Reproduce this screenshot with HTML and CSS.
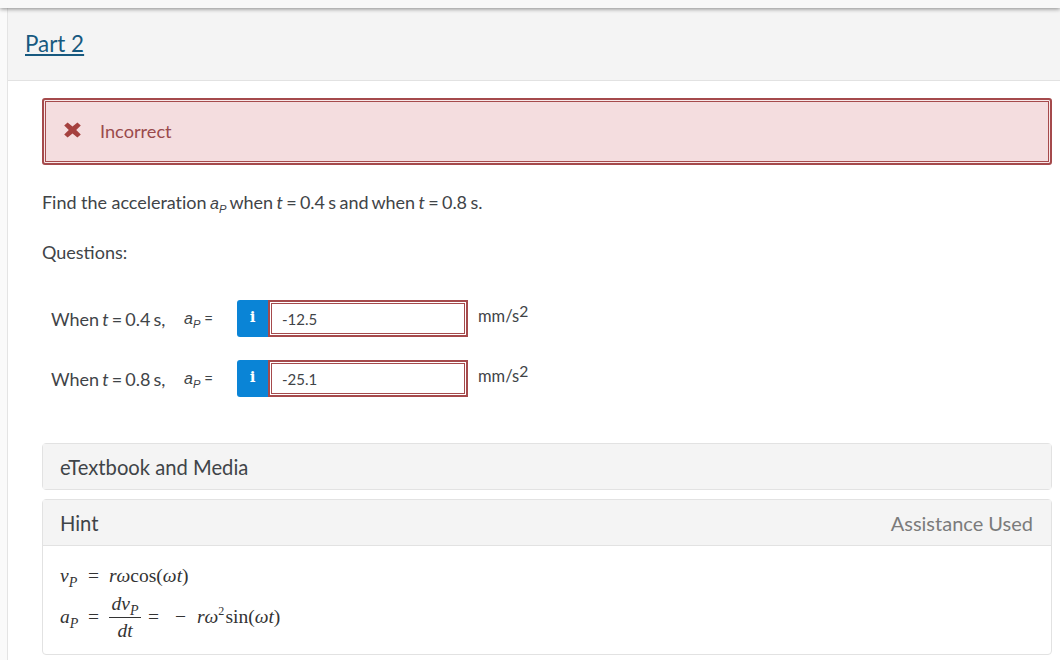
FILE: index.html
```html
<!DOCTYPE html>
<html lang="en">

<head>
  <meta charset="UTF-8">
  <title>Part 2</title>
  <link rel="stylesheet" href="styles.css">
</head>

<body>
  <div class="topbar"></div>

  <div class="part">
    <div class="part-head">
      <a class="part-link" href="#">Part 2</a>
    </div>

    <div class="part-body">
      <div class="alert">
        <svg class="alert-icon" viewBox="0 0 17 16" width="17" height="16">
          <path d="M3.6 0.4 L8.5 4.6 L13.4 0.4 L16.8 3.6 L12.2 8 L16.8 12.4 L13.4 15.6 L8.5 11.4 L3.6 15.6 L0.2 12.4 L4.8 8 L0.2 3.6 Z" />
        </svg>
        <span>Incorrect</span>
      </div>

      <p class="prompt">Find the acceleration <i class="var var-inline">a<sub>P</sub></i><span class="tight-prompt">when <i>t</i> = 0.4 s and when <i>t</i> = 0.8 s.</span></p>

      <p class="questions">Questions:</p>

      <div class="answers">
        <div class="answer">
          <span class="answer-label">When <i>t</i> = 0.4 s,</span>
          <span class="answer-var"><i class="var">a<sub>P</sub></i> =</span>
          <span class="info">i</span>
          <input class="answer-input" type="text" value="-12.5" readonly>
          <span class="unit">mm/s<sup>2</sup></span>
        </div>

        <div class="answer">
          <span class="answer-label">When <i>t</i> = 0.8 s,</span>
          <span class="answer-var"><i class="var">a<sub>P</sub></i> =</span>
          <span class="info">i</span>
          <input class="answer-input" type="text" value="-25.1" readonly>
          <span class="unit">mm/s<sup>2</sup></span>
        </div>
      </div>

      <div class="panel panel-media">
        <div class="panel-head">eTextbook and Media</div>
      </div>

      <div class="panel">
        <div class="panel-head">
          <span>Hint</span>
          <span class="panel-note">Assistance Used</span>
        </div>
        <div class="hint-body">
          <div class="eq">
            <span class="eq-left"><i>v<sub>P</sub></i></span>
            <span class="eq-sign">=</span>
            <span><i>rω</i>cos(<i>ωt</i>)</span>
          </div>
          <div class="eq eq-frac">
            <span class="eq-left"><i>a<sub>P</sub></i></span>
            <span class="eq-sign">=</span>
            <span class="frac">
              <span class="frac-top"><i>dv<sub>P</sub></i></span>
              <span class="frac-bottom"><i>dt</i></span>
            </span>
            <span class="eq-sign eq-sign-2">=</span>
            <span class="eq-minus">−</span>
            <span><i>rω</i><sup>2</sup>sin(<i>ωt</i>)</span>
          </div>
        </div>
      </div>
    </div>
  </div>
</body>

</html>
```

FILE: styles.css
```css
* {
  box-sizing: border-box;
}

body {
  margin: 0;
  height: 660px;
  overflow: hidden;
  font-family: Lato, Arial, sans-serif;
  font-size: 18px;
  color: #3f4448;
  background-color: #fafafa;
}

.topbar {
  height: 8px;
  background-color: #f8f8f8;
  box-shadow: 0 1px 4px rgba(0, 0, 0, .45);
  position: relative;
}

/* PART */

.part {
  margin-left: 7px;
  height: 652px;
  background-color: #ffffff;
  border-left: 1px solid #e4e4e4;
}

.part-head {
  height: 73px;
  padding: 21px 0 0 17px;
  background-color: #f4f4f4;
  border-bottom: 1px solid #e2e2e2;
}

.part-link {
  font-size: 22.4px;
  line-height: 30px;
  color: #17597f;
  text-decoration: underline;
}

.part-body {
  padding: 17px 8px 0 34px;
}

/* ALERT */

.alert {
  display: flex;
  align-items: center;
  height: 67px;
  padding-left: 20px;
  padding-bottom: 1px;
  font-size: 18.2px;
  color: #9a4a4c;
  background-color: #f4dddf;
  border: 2px solid #a54a4c;
  border-radius: 3px;
  box-shadow: inset 0 0 0 1px #f8e8e9, inset 0 0 0 2px #a54a4c;
}

.alert-icon {
  margin-right: 19px;
  margin-bottom: 3px;
  fill: #a5413f;
}

/* QUESTIONS */

.prompt,
.questions {
  margin: 0;
  line-height: 24px;
}

.prompt {
  margin-top: 25px;
  letter-spacing: -.03px;
}

.questions {
  margin-top: 24px;
}

.tight-prompt {
  word-spacing: -1.2px;
}

.var {
  font-family: "Liberation Sans", Arial, sans-serif;
  font-size: 16px;
}

.var-inline {
  margin: 0 3px 0 -1px;
}

sub,
sup {
  font-size: 70%;
  line-height: 0;
}

.answers {
  display: flex;
  flex-direction: column;
  gap: 22px;
  margin-top: 35px;
}

.answer {
  display: flex;
  align-items: center;
  height: 38px;
  padding-left: 9px;
}

.answer-label {
  width: 133px;
  padding-top: 1px;
  word-spacing: -1.5px;
}

.answer-var {
  width: 53px;
  font-size: 15px;
}

.info {
  display: flex;
  align-items: center;
  justify-content: center;
  width: 31px;
  height: 37px;
  padding-bottom: 2px;
  font-family: "DejaVu Serif", serif;
  font-size: 15px;
  font-weight: 700;
  color: #ffffff;
  background-color: #0a84d6;
  border-radius: 3px 0 0 3px;
}

.answer-input {
  width: 200px;
  height: 37px;
  padding: 2px 0 0 12px;
  font-family: Lato, Arial, sans-serif;
  font-size: 15px;
  color: #3f4448;
  background-color: #ffffff;
  border: 2px solid #a54a4c;
  box-shadow: inset 0 0 0 1px #ffffff, inset 0 0 0 2px #a54a4c;
  outline: none;
}

.unit {
  margin-left: 10px;
  padding-bottom: 5px;
  font-size: 16.5px;
}

.unit sup {
  position: relative;
  top: 2px;
  font-size: 95%;
}

/* PANELS */

.panel {
  margin-top: 9px;
  border: 1px solid #e2e2e2;
  border-radius: 4px;
}

.panel-media {
  margin-top: 46px;
}

.panel-head {
  display: flex;
  justify-content: space-between;
  align-items: center;
  height: 45px;
  padding: 0 18px 0 17px;
  font-size: 20.2px;
  background-color: #f4f4f4;
}

.panel-note {
  font-size: 20px;
  color: #7b7b7b;
}

.hint-body {
  height: 109px;
  padding: 19px 0 0 17px;
  font-family: "Liberation Serif", serif;
  font-size: 19.5px;
  color: #333333;
  border-top: 1px solid #e2e2e2;
}

.eq {
  display: flex;
  align-items: center;
  height: 22px;
}

.eq-frac {
  height: 46px;
  margin-top: 7px;
}

.eq-left {
  width: 28px;
}

.eq-sign {
  width: 21px;
}

.eq-sign-2 {
  width: 27px;
  margin-left: 7px;
}

.eq-minus {
  width: 22px;
}

.frac {
  display: flex;
  flex-direction: column;
  align-items: center;
  width: 32px;
}

.frac-top {
  width: 100%;
  padding-bottom: 2px;
  text-align: center;
  border-bottom: 1px solid #333333;
}

.frac-bottom {
  padding-top: 2px;
}

.eq sub {
  font-size: 72%;
}

.eq sup {
  font-size: 62%;
  margin-right: 1px;
  position: relative;
  top: -1px;
}
```
